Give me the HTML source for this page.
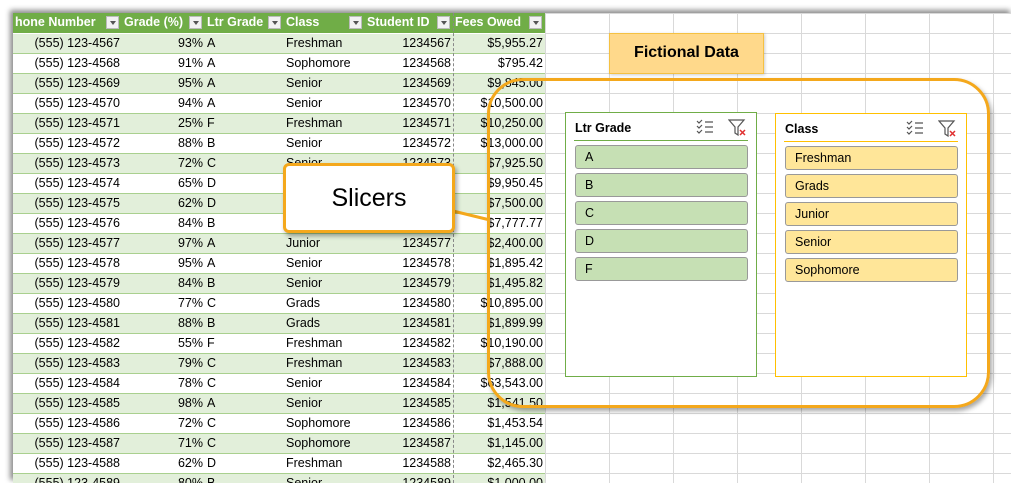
<!DOCTYPE html>
<html><head><meta charset="utf-8"><style>
*{margin:0;padding:0;box-sizing:border-box}
body{width:1011px;height:476px;overflow:hidden;background:#fff;position:relative;font-family:"Liberation Sans",sans-serif}
#sheet{position:absolute;left:13px;top:13px;width:1000px;height:470px;background:#fff;box-shadow:-3px -3px 5px rgba(0,0,0,.45);overflow:hidden;
background-image:linear-gradient(to right,#d9d9d9 1px,transparent 1px),linear-gradient(to bottom,#d9d9d9 1px,transparent 1px);
background-size:64px 20px;background-position:20px 0}
table{position:absolute;left:0;top:0;border-collapse:collapse;table-layout:fixed;font-size:12.5px;color:#000}
td{height:20px;padding:0 2px;white-space:nowrap;overflow:hidden;border-bottom:1px solid #A9D08E;line-height:19px}
tr.g td{background:#E2EFDA}
tr.w td{background:#fff}
tr.h td{background:#70AD47;color:#fff;font-weight:bold;position:relative;border-bottom:1px solid #fff}
.r{text-align:right}
.dd{position:absolute;right:3px;top:3px;width:13px;height:13px;background:#f2f2f2;border:1px solid #bbb}
.dd:after{content:"";position:absolute;left:3px;top:4px;border-left:3px solid transparent;border-right:3px solid transparent;border-top:4px solid #555}
#dash{position:absolute;left:440px;top:0;height:470px;border-left:1px dashed #888}
.fd{position:absolute;left:609px;top:33px;width:155px;height:41px;background:#FFD98B;border:1px solid #F5C142;font-weight:bold;font-size:16px;text-align:center;line-height:38px;box-shadow:1px 1px 3px rgba(0,0,0,.2)}
.ring{position:absolute;left:487px;top:78px;width:503px;height:330px;border:3px solid #F4A81C;border-radius:36px;box-shadow:2px 3px 5px rgba(0,0,0,.35)}
.sl{position:absolute;top:112px;width:192px;height:265px;background:#fff}
.sl .t{position:absolute;left:9px;top:8px;font-size:12.5px;font-weight:bold}
.sl .u{position:absolute;left:8px;right:8px;top:27px;height:1px}
.it{position:absolute;left:9px;width:173px;height:24px;border:1px solid #999;border-radius:3px;font-size:12.5px;line-height:22px;padding-left:9px}
.ic{position:absolute;top:6px;font-size:13px;color:#555}
.call{position:absolute;left:283px;top:163px;width:172px;height:70px;background:#fff;border:3px solid #F4A81C;border-radius:6px;font-size:25px;text-align:center;line-height:64px;box-shadow:2px 3px 5px rgba(0,0,0,.35)}
</style></head><body>
<div id="sheet">
<table>
<colgroup><col style="width:109px"><col style="width:83px"><col style="width:79px"><col style="width:81px"><col style="width:88px"><col style="width:92px"></colgroup>
<tr class="h"><td>hone Number<span class="dd"></span></td><td>Grade (%)<span class="dd"></span></td><td>Ltr Grade<span class="dd"></span></td><td>Class<span class="dd"></span></td><td>Student ID<span class="dd"></span></td><td>Fees Owed<span class="dd"></span></td></tr>
<tr class="g"><td class="r">(555) 123-4567</td><td class="r">93%</td><td>A</td><td>Freshman</td><td class="r">1234567</td><td class="r">$5,955.27</td></tr>
<tr class="w"><td class="r">(555) 123-4568</td><td class="r">91%</td><td>A</td><td>Sophomore</td><td class="r">1234568</td><td class="r">$795.42</td></tr>
<tr class="g"><td class="r">(555) 123-4569</td><td class="r">95%</td><td>A</td><td>Senior</td><td class="r">1234569</td><td class="r">$9,845.00</td></tr>
<tr class="w"><td class="r">(555) 123-4570</td><td class="r">94%</td><td>A</td><td>Senior</td><td class="r">1234570</td><td class="r">$10,500.00</td></tr>
<tr class="g"><td class="r">(555) 123-4571</td><td class="r">25%</td><td>F</td><td>Freshman</td><td class="r">1234571</td><td class="r">$10,250.00</td></tr>
<tr class="w"><td class="r">(555) 123-4572</td><td class="r">88%</td><td>B</td><td>Senior</td><td class="r">1234572</td><td class="r">$13,000.00</td></tr>
<tr class="g"><td class="r">(555) 123-4573</td><td class="r">72%</td><td>C</td><td>Senior</td><td class="r">1234573</td><td class="r">$7,925.50</td></tr>
<tr class="w"><td class="r">(555) 123-4574</td><td class="r">65%</td><td>D</td><td>Senior</td><td class="r">1234574</td><td class="r">$9,950.45</td></tr>
<tr class="g"><td class="r">(555) 123-4575</td><td class="r">62%</td><td>D</td><td>Senior</td><td class="r">1234575</td><td class="r">$7,500.00</td></tr>
<tr class="w"><td class="r">(555) 123-4576</td><td class="r">84%</td><td>B</td><td>Senior</td><td class="r">1234576</td><td class="r">$7,777.77</td></tr>
<tr class="g"><td class="r">(555) 123-4577</td><td class="r">97%</td><td>A</td><td>Junior</td><td class="r">1234577</td><td class="r">$2,400.00</td></tr>
<tr class="w"><td class="r">(555) 123-4578</td><td class="r">95%</td><td>A</td><td>Senior</td><td class="r">1234578</td><td class="r">$1,895.42</td></tr>
<tr class="g"><td class="r">(555) 123-4579</td><td class="r">84%</td><td>B</td><td>Senior</td><td class="r">1234579</td><td class="r">$1,495.82</td></tr>
<tr class="w"><td class="r">(555) 123-4580</td><td class="r">77%</td><td>C</td><td>Grads</td><td class="r">1234580</td><td class="r">$10,895.00</td></tr>
<tr class="g"><td class="r">(555) 123-4581</td><td class="r">88%</td><td>B</td><td>Grads</td><td class="r">1234581</td><td class="r">$1,899.99</td></tr>
<tr class="w"><td class="r">(555) 123-4582</td><td class="r">55%</td><td>F</td><td>Freshman</td><td class="r">1234582</td><td class="r">$10,190.00</td></tr>
<tr class="g"><td class="r">(555) 123-4583</td><td class="r">79%</td><td>C</td><td>Freshman</td><td class="r">1234583</td><td class="r">$7,888.00</td></tr>
<tr class="w"><td class="r">(555) 123-4584</td><td class="r">78%</td><td>C</td><td>Senior</td><td class="r">1234584</td><td class="r">$63,543.00</td></tr>
<tr class="g"><td class="r">(555) 123-4585</td><td class="r">98%</td><td>A</td><td>Senior</td><td class="r">1234585</td><td class="r">$1,541.50</td></tr>
<tr class="w"><td class="r">(555) 123-4586</td><td class="r">72%</td><td>C</td><td>Sophomore</td><td class="r">1234586</td><td class="r">$1,453.54</td></tr>
<tr class="g"><td class="r">(555) 123-4587</td><td class="r">71%</td><td>C</td><td>Sophomore</td><td class="r">1234587</td><td class="r">$1,145.00</td></tr>
<tr class="w"><td class="r">(555) 123-4588</td><td class="r">62%</td><td>D</td><td>Freshman</td><td class="r">1234588</td><td class="r">$2,465.30</td></tr>
<tr class="g"><td class="r">(555) 123-4589</td><td class="r">80%</td><td>B</td><td>Senior</td><td class="r">1234589</td><td class="r">$1,000.00</td></tr>
</table>
<div id="dash"></div>
</div>

<div class="fd">Fictional Data</div>

<div class="sl" style="left:565px;border:1px solid #70AD47">
<div class="t">Ltr Grade</div>
<svg class="ic" style="left:130px" width="18" height="16" viewBox="0 0 18 16" fill="none" stroke="#555" stroke-width="1.2"><path d="M1 2l2 2 3-3M1 7l2 2 3-3M1 12l2 2 3-3M9 3h8M9 8h8M9 13h8"/></svg>
<svg class="ic" style="left:162px" width="20" height="18" viewBox="0 0 20 18" fill="none"><path d="M1 1h15l-6 7v8l-3-2V8z" stroke="#555" stroke-width="1.2"/><path d="M12 11l5 5M17 11l-5 5" stroke="#e03030" stroke-width="1.5"/></svg>
<div class="u" style="background:#70AD47"></div>
<div class="it" style="top:32px;background:#C6E0B4">A</div>
<div class="it" style="top:60px;background:#C6E0B4">B</div>
<div class="it" style="top:88px;background:#C6E0B4">C</div>
<div class="it" style="top:116px;background:#C6E0B4">D</div>
<div class="it" style="top:144px;background:#C6E0B4">F</div>
</div>

<div class="sl" style="left:775px;top:113px;height:264px;border:1px solid #FFC000">
<div class="t">Class</div>
<svg class="ic" style="left:130px" width="18" height="16" viewBox="0 0 18 16" fill="none" stroke="#555" stroke-width="1.2"><path d="M1 2l2 2 3-3M1 7l2 2 3-3M1 12l2 2 3-3M9 3h8M9 8h8M9 13h8"/></svg>
<svg class="ic" style="left:162px" width="20" height="18" viewBox="0 0 20 18" fill="none"><path d="M1 1h15l-6 7v8l-3-2V8z" stroke="#555" stroke-width="1.2"/><path d="M12 11l5 5M17 11l-5 5" stroke="#e03030" stroke-width="1.5"/></svg>
<div class="u" style="background:#FFC000"></div>
<div class="it" style="top:32px;background:#FFE699">Freshman</div>
<div class="it" style="top:60px;background:#FFE699">Grads</div>
<div class="it" style="top:88px;background:#FFE699">Junior</div>
<div class="it" style="top:116px;background:#FFE699">Senior</div>
<div class="it" style="top:144px;background:#FFE699">Sophomore</div>
</div>

<div class="ring"></div>
<svg style="position:absolute;left:450px;top:205px" width="45" height="25"><path d="M3 6L40 15" stroke="#F4A81C" stroke-width="3"/></svg>
<div class="call">Slicers</div>
</body></html>
